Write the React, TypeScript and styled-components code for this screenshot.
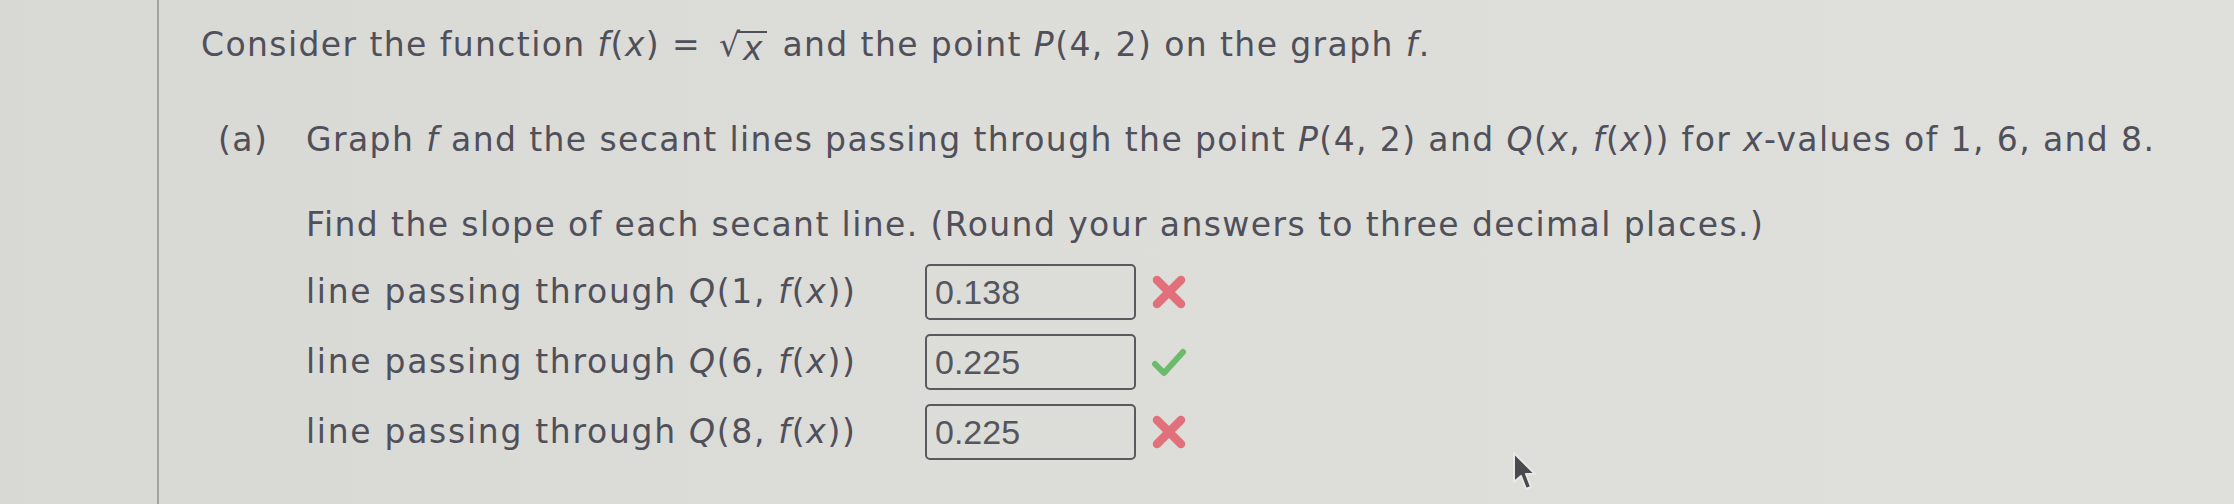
import { createGlobalStyle, styled } from 'styled-components'

const GlobalStyle = createGlobalStyle`
  html, body {
    margin: 0;
    padding: 0;
    background: #dbdbd8;
  }
  body {
    width: 2234px;
    height: 504px;
    overflow: hidden;
  }
`

const Page = styled.div`
  display: flex;
  width: 2234px;
  height: 504px;
  background: linear-gradient(90deg, #d8d8d5 0%, #dcdcd9 40%, #dfdfdc 100%);
  font-family: 'DejaVu Sans', Verdana, sans-serif;
  color: #50505a;
  position: relative;
`

const SideRail = styled.div`
  width: 157px;
  flex-shrink: 0;
  border-right: 2px solid #a3a3a2;
`

const Question = styled.section`
  flex: 1;
  padding: 25px 0 0 42px;
  display: flex;
  flex-direction: column;
`

const Line = styled.p`
  margin: 0;
  font-size: 33px;
  line-height: 40px;
  letter-spacing: 1.4px;
  white-space: nowrap;
`

const Part = styled.div`
  display: grid;
  grid-template-columns: 92px auto;
  margin: 55px 0 0 17px;
`

const PartBody = styled.div`
  display: flex;
  flex-direction: column;
  margin-left: -4px;
`

const Hint = styled(Line)`
  margin-top: 45px;
`

const Answers = styled.div`
  display: flex;
  flex-direction: column;
  gap: 14px;
  margin-top: 19px;
`

const AnswerRow = styled.div`
  display: grid;
  grid-template-columns: 604px 211px 36px;
  column-gap: 15px;
  align-items: center;
`

const Label = styled(Line)`
  letter-spacing: 1.7px;
`

const AnswerBox = styled.div`
  box-sizing: border-box;
  height: 56px;
  border: 2px solid #5a5a5e;
  border-radius: 5px;
  padding: 0 8px;
  display: flex;
  align-items: center;
  font-family: 'Liberation Sans', Arial, sans-serif;
  font-size: 34px;
  letter-spacing: 0;
  color: #55555c;
`

const Mark = styled.svg`
  width: 36px;
  height: 36px;
  display: block;
`

const Var = styled.i`
  font-style: italic;
`

const Radical = styled.span`
  display: inline-flex;
  align-items: flex-end;
  margin: 0 3px 0 6px;
  letter-spacing: 0;
`

const Radicand = styled.i`
  font-style: italic;
  border-top: 2px solid #50505a;
  padding: 0 5px 0 6px;
  margin-left: -3px;
  line-height: 32px;
`

const Cursor = styled.svg`
  position: absolute;
  left: 1512px;
  top: 451px;
  width: 26px;
  height: 42px;
`

const WrongMark = () => (
  <Mark viewBox="0 0 36 36">
    <path d="M6 6 L30 30 M30 6 L6 30" stroke="#e2707a" strokeWidth="8.5" strokeLinecap="round" fill="none" />
  </Mark>
)

const RightMark = () => (
  <Mark viewBox="0 0 36 36">
    <path d="M4 20 L13 29 L32 8" stroke="#6bbb6b" strokeWidth="6" strokeLinecap="round" strokeLinejoin="round" fill="none" />
  </Mark>
)

const answers = [
  { x: 1, value: '0.138', correct: false },
  { x: 6, value: '0.225', correct: true },
  { x: 8, value: '0.225', correct: false },
]

const App = () => (
  <>
    <GlobalStyle />
    <Page>
      <SideRail />
      <Question>
        <Line>
          Consider the function <Var>f</Var>(<Var>x</Var>) ={' '}
          <Radical>
            √<Radicand>x</Radicand>
          </Radical>{' '}
          and the point <Var>P</Var>(4, 2) on the graph <Var>f</Var>.
        </Line>
        <Part>
          <Line>(a)</Line>
          <PartBody>
            <Line>
              Graph <Var>f</Var> and the secant lines passing through the point <Var>P</Var>(4, 2) and{' '}
              <Var>Q</Var>(<Var>x</Var>, <Var>f</Var>(<Var>x</Var>)) for <Var>x</Var>-values of 1, 6, and 8.
            </Line>
            <Hint>Find the slope of each secant line. (Round your answers to three decimal places.)</Hint>
            <Answers>
              {answers.map((a) => (
                <AnswerRow key={a.x}>
                  <Label>
                    line passing through <Var>Q</Var>({a.x}, <Var>f</Var>(<Var>x</Var>))
                  </Label>
                  <AnswerBox>{a.value}</AnswerBox>
                  {a.correct ? <RightMark /> : <WrongMark />}
                </AnswerRow>
              ))}
            </Answers>
          </PartBody>
        </Part>
      </Question>
      <Cursor viewBox="0 0 26 42">
        <path d="M2 2 L2 31 L9 25 L14 38 L19 36 L14 23 L23 23 Z" fill="#4a4a4e" stroke="#e8e8e6" strokeWidth="2" strokeLinejoin="round" />
      </Cursor>
    </Page>
  </>
)

export default App
